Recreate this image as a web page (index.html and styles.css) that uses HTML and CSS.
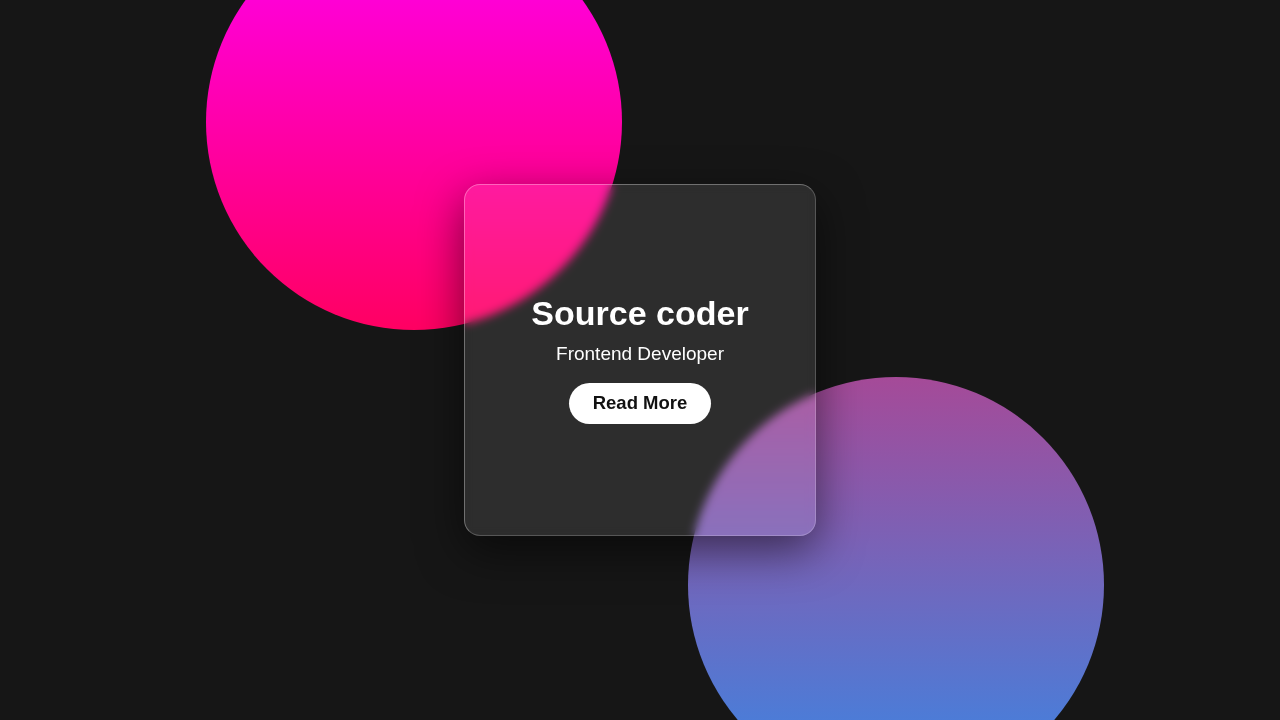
FILE: index.html
```html
<!DOCTYPE html>
<html lang="en">
<head>
<meta charset="UTF-8">
<title>Glass Card</title>
<link rel="stylesheet" href="styles.css">
</head>
<body>
  <div class="backdrop">
    <div class="circle circle-pink"></div>
    <div class="circle circle-blue"></div>
  </div>
  <div class="card">
    <h2 class="card-title">Source coder</h2>
    <p class="card-sub">Frontend Developer</p>
    <a class="card-btn" href="#">Read More</a>
  </div>
</body>
</html>
```

FILE: styles.css
```css
* { box-sizing: border-box; margin: 0; padding: 0; }
html, body { width: 100%; height: 100%; overflow: hidden; }
body {
  background: #161616;
  font-family: "Liberation Sans", Arial, sans-serif;
  display: flex;
  align-items: center;
  justify-content: center;
  position: relative;
}
.backdrop {
  position: absolute;
  inset: 0;
  overflow: hidden;
}
.circle {
  position: absolute;
  width: 416px;
  height: 416px;
  border-radius: 50%;
}
.circle-pink {
  left: 206px;
  top: -86px;
  background: linear-gradient(#ff00f2, #ff0062);
}
.circle-blue {
  left: 688px;
  top: 377px;
  background: linear-gradient(#a54a98, #3a86e4);
}
.card {
  position: relative;
  width: 352px;
  height: 352px;
  border-radius: 16px;
  border: 1px solid rgba(255, 255, 255, 0.2);
  border-top-color: rgba(255, 255, 255, 0.32);
  border-left-color: rgba(255, 255, 255, 0.32);
  background: rgba(255, 255, 255, 0.1);
  backdrop-filter: blur(5px);
  -webkit-backdrop-filter: blur(5px);
  box-shadow: 0 15px 45px rgba(0, 0, 0, 0.55);
  display: flex;
  flex-direction: column;
  align-items: center;
  justify-content: center;
  color: #fff;
}
.card-title {
  font-size: 34px;
  font-weight: 700;
  line-height: 36px;
  margin-bottom: 12px;
  margin-top: -2px;
}
.card-sub {
  font-size: 19px;
  line-height: 22px;
  margin-bottom: 18px;
}
.card-btn {
  display: inline-flex;
  align-items: center;
  justify-content: center;
  width: 142px;
  height: 41px;
  border-radius: 21px;
  background: #fff;
  color: #111;
  font-size: 18.5px;
  font-weight: 700;
  text-decoration: none;
}
```
